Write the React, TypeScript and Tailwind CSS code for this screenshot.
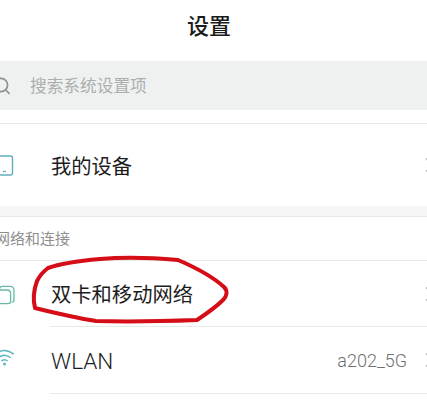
const font = { fontFamily: '"Noto Sans CJK SC", "Noto Sans", sans-serif' };
const latin = { fontFamily: 'Roboto, "Liberation Sans", sans-serif' };

function Chevron() {
  return (
    <svg className="absolute left-[425px] top-1/2 -translate-y-1/2" width="10" height="16" viewBox="0 0 10 16" fill="none">
      <path d="M1 1.5 L7.5 8 L1 14.5" stroke="#b4b4b4" strokeWidth="1.3" />
    </svg>
  );
}

export default function App() {
  return (
    <div className="relative w-[427px] h-[416px] overflow-hidden bg-white" style={font}>
      <div className="h-[61px] flex items-center justify-center pr-[9px] pb-[13px] text-[22px] font-medium leading-none text-[#1c1c1c]">设置</div>

      <div className="h-[49px] bg-[#eff1f1] flex items-center">
        <svg className="ml-[-8px] shrink-0" width="20" height="20" viewBox="0 0 20 20" fill="none">
          <circle cx="9" cy="9" r="6.6" stroke="#8f9191" strokeWidth="1.7" />
          <path d="M13.8 14 L17.6 18" stroke="#8f9191" strokeWidth="1.7" />
        </svg>
        <span className="ml-[18px] text-[16.7px] text-[#acaeae] leading-none">搜索系统设置项</span>
      </div>

      <div className="h-[13px]" />
      <div className="h-px bg-[#e9e9e9]" />

      <div className="relative h-[82px] flex items-center">
        <svg className="absolute left-[-6px] top-[31px]" width="20" height="22" viewBox="0 0 20 22" fill="none">
          <rect x="1" y="1" width="17.5" height="19" rx="2" stroke="#5faec0" strokeWidth="1.4" />
          <path d="M9 16.5 H12" stroke="#5faec0" strokeWidth="1.3" />
        </svg>
        <span className="ml-[51px] text-[20.3px] leading-none text-[#1c1c1c]">我的设备</span>
        <Chevron />
      </div>

      <div className="h-[11px] bg-[#f5f5f5] border-b border-[#e9e9e9]" />

      <div className="h-[43px] flex items-center pb-[3px] overflow-hidden">
        <span className="ml-[-5px] text-[15px] leading-none text-[#8e8e8e]">网络和连接</span>
      </div>
      <div className="h-px bg-[#e9e9e9]" />

      <div className="relative h-[65px] flex items-center">
        <svg className="absolute left-[-6px] top-[24px]" width="22" height="20" viewBox="0 0 22 20" fill="none">
          <path d="M6 3.4 Q6 1.4 8 1.4 H16 Q20 1.4 20 5.4 V15 Q20 17 18 17" stroke="#67b9ab" strokeWidth="1.3" />
          <path d="M3 5 H13 Q16.6 5 16.6 8.6 V16 Q16.6 18.6 14 18.6 H3 Q1 18.6 1 16 V7 Q1 5 3 5 Z" stroke="#67b9ab" strokeWidth="1.3" />
        </svg>
        <span className="ml-[51px] text-[20.3px] leading-none text-[#1c1c1c]">双卡和移动网络</span>
        <Chevron />
      </div>
      <div className="h-px ml-[50px] bg-[#e9e9e9]" />

      <div className="relative h-[66px] flex items-center">
        <svg className="absolute left-[-6px] top-[21px]" width="22" height="20" viewBox="0 0 22 20" fill="none">
          <path d="M1.2 6.2 Q10.5 -1.4 19.8 6.2" stroke="#5fb6c4" strokeWidth="1.5" />
          <path d="M4.4 9.8 Q10.5 4.6 16.6 9.8" stroke="#5fb6c4" strokeWidth="1.5" />
          <path d="M7.4 13 Q10.5 10.4 13.6 13" stroke="#5fb6c4" strokeWidth="1.5" />
          <circle cx="10.5" cy="16" r="1.5" fill="#5fb6c4" />
        </svg>
        <span className="ml-[51px] pt-[3px] text-[22.5px] font-light leading-none text-[#1c1c1c]" style={latin}>WLAN</span>
        <span className="absolute right-[20px] top-1/2 -translate-y-1/2 pt-[1px] text-[18px] font-light leading-none text-[#707070]" style={latin}>a202_5G</span>
        <Chevron />
      </div>
      <div className="h-px ml-[50px] bg-[#e9e9e9]" />

      <svg className="absolute left-0 top-0 pointer-events-none" width="427" height="416" viewBox="0 0 427 416" fill="none">
        <path
          d="M48 268 C 62 263, 78 261, 100 259 C 125 257, 155 258, 178 260 C 192 266, 212 276, 224 287 C 228 291, 227 296, 223 300 C 216 307, 206 314, 197 320 C 170 321, 130 322, 96 321 C 76 318, 55 313, 35 308 C 33 300, 33 292, 37 281 C 40 275, 44 271, 48 268 Z"
          stroke="#d40d17"
          strokeWidth="4"
          strokeLinejoin="round"
        />
      </svg>
    </div>
  );
}
